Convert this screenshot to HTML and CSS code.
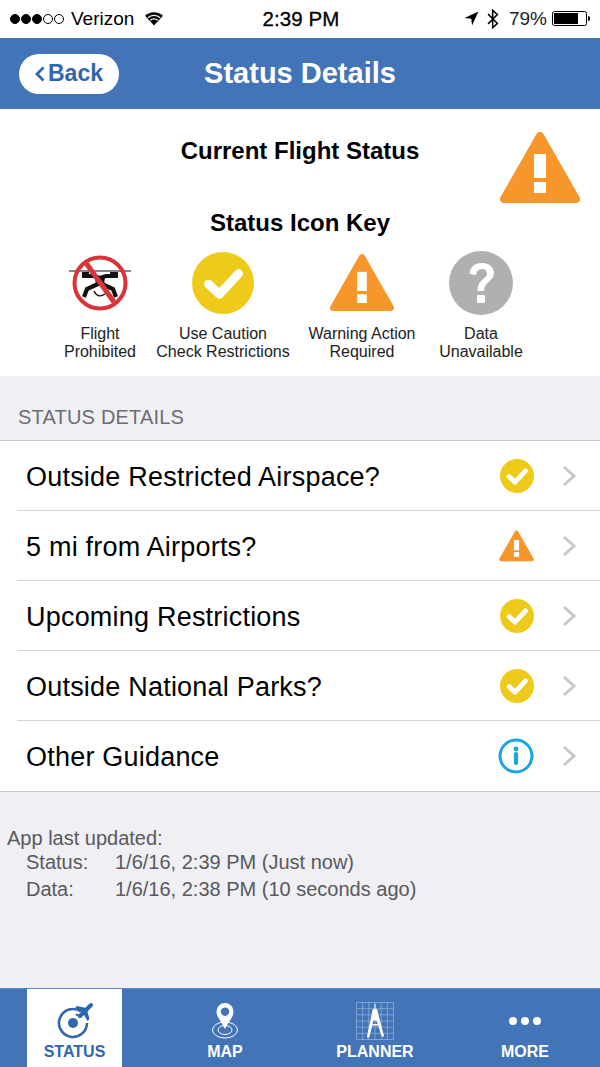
FILE: index.html
```html
<!DOCTYPE html>
<html lang="en">
<head>
<meta charset="utf-8">
<title>Status Details</title>
<link rel="stylesheet" href="styles.css">
</head>
<body>
<svg class="defs" width="0" height="0" aria-hidden="true">
  <symbol id="warn" viewBox="0 0 80 74">
    <path d="M40 5 L76 68 H4 Z" fill="#f7962a" stroke="#f7962a" stroke-width="8" stroke-linejoin="round"/>
    <rect x="34" y="23" width="12" height="24" fill="#fff"/>
    <rect x="34" y="51" width="12" height="11" fill="#fff"/>
  </symbol>
  <symbol id="check" viewBox="0 0 60 60">
    <circle cx="30" cy="30" r="30" fill="#eecb1b"/>
    <path d="M16 31 L26.500 41 L45 21" fill="none" stroke="#fff" stroke-width="8.500" stroke-linecap="round" stroke-linejoin="round"/>
  </symbol>
  <symbol id="chev" viewBox="0 0 14 22">
    <path d="M2 2 L12 11 L2 20" fill="none" stroke="#c7c7cc" stroke-width="3"/>
  </symbol>
</svg>
<div class="page">
  <header class="statusbar">
    <div class="sb-left">
      <span class="dots"><i class="dot"></i><i class="dot"></i><i class="dot"></i><i class="dot off"></i><i class="dot off"></i></span>
      <span>Verizon</span>
      <svg class="wifi" width="20" height="15" viewBox="0 0 18 14"><path d="M9 13.500 L0.600 4.500 A12 12 0 0 1 17.400 4.500 Z" fill="#000"/><path d="M3.300 6.300 A8.300 8.300 0 0 1 14.700 6.300 M5.500 8.700 A5 5 0 0 1 12.500 8.700" fill="none" stroke="#fff" stroke-width="1.200"/></svg>
    </div>
    <div class="sb-time">2:39 PM</div>
    <div class="sb-right">
      <svg width="15" height="15" viewBox="0 0 14 14"><path d="M13.500 0.500 L0.500 6.500 L6.800 7.200 L7.500 13.500 Z" fill="#000"/></svg>
      <svg class="bt" width="12" height="20" viewBox="0 0 11 18"><path d="M1 4.500 L9.500 13 L5.200 17 V1 L9.500 5 L1 13.500" fill="none" stroke="#000" stroke-width="1.400"/></svg>
      <span class="pct">79%</span>
      <span class="battery"><span class="battery-fill"></span></span><span class="battery-tip"></span>
    </div>
  </header>

  <nav class="navbar">
    <a class="back"><svg width="10" height="16" viewBox="0 0 10 16"><path d="M8.500 1.500 L2 8 L8.500 14.500" fill="none" stroke="#2f66ae" stroke-width="2.800"/></svg>Back</a>
    <h1 class="nav-title">Status Details</h1>
    <span></span>
  </nav>

  <section class="panel">
    <div class="current">
      <span></span>
      <h2 class="panel-title">Current Flight Status</h2>
      <svg class="current-icon" width="80" height="74"><use href="#warn"/></svg>
    </div>
    <h2 class="panel-title key-title">Status Icon Key</h2>
    <div class="key">
      <div class="key-item">
        <svg class="key-icon" width="62" height="62" viewBox="0 0 62 62">
          <path d="M0 19 H62" stroke="#111" stroke-width="1.200"/>
          <path d="M13 20 H20 V23 H13 Z M41 20 H49 V23 H41 Z" fill="#111"/>
          <path d="M13 24 H25 L31 26 L37 24 H49" fill="none" stroke="#111" stroke-width="4"/>
          <path d="M26 25 H36 L35 33 H27 Z" fill="#111"/>
          <path d="M31 31 L18 37 L15 45 M31 31 L44 37 L47 45" fill="none" stroke="#111" stroke-width="4.200"/>
          <path d="M25 39 Q29 47 36 42" fill="none" stroke="#111" stroke-width="1.400"/>
          <circle cx="31" cy="31" r="25.500" fill="none" stroke="#d9343c" stroke-width="4"/>
          <path d="M17 11 L45 50" stroke="#d9343c" stroke-width="5"/>
        </svg>
        <div class="key-label">Flight<br>Prohibited</div>
      </div>
      <div class="key-item">
        <svg class="key-icon" width="62" height="62"><use href="#check"/></svg>
        <div class="key-label">Use Caution<br>Check Restrictions</div>
      </div>
      <div class="key-item">
        <svg class="key-icon" width="64" height="60"><use href="#warn"/></svg>
        <div class="key-label">Warning Action<br>Required</div>
      </div>
      <div class="key-item">
        <svg class="key-icon" width="64" height="64" viewBox="0 0 64 64">
          <circle cx="32" cy="32" r="32" fill="#b0b0b0"/>
          <path d="M20.500 23 C21 15 27 12 33 12 C40 12 45 16 45 22 C45 30 35 31 35 40 H28.500 C28.500 28 38 28 38 22.500 C38 19.500 36 18 33 18 C29.500 18 27.500 20 27 24 Z" fill="#fff"/>
          <rect x="28" y="44" width="8" height="8" rx="1" fill="#fff"/>
        </svg>
        <div class="key-label">Data<br>Unavailable</div>
      </div>
    </div>
  </section>

  <main class="details">
    <div class="section-label">STATUS DETAILS</div>
    <ul class="list">
      <li class="row"><span class="row-text">Outside Restricted Airspace?</span><svg class="row-icon" width="34" height="34"><use href="#check"/></svg><svg class="chev" width="14" height="22"><use href="#chev"/></svg></li>
      <li class="row"><span class="row-text">5 mi from Airports?</span><svg class="row-icon" width="35" height="32"><use href="#warn"/></svg><svg class="chev" width="14" height="22"><use href="#chev"/></svg></li>
      <li class="row"><span class="row-text">Upcoming Restrictions</span><svg class="row-icon" width="34" height="34"><use href="#check"/></svg><svg class="chev" width="14" height="22"><use href="#chev"/></svg></li>
      <li class="row"><span class="row-text">Outside National Parks?</span><svg class="row-icon" width="34" height="34"><use href="#check"/></svg><svg class="chev" width="14" height="22"><use href="#chev"/></svg></li>
      <li class="row"><span class="row-text">Other Guidance</span>
        <svg class="row-icon" width="36" height="36" viewBox="0 0 36 36"><circle cx="18" cy="18" r="16" fill="none" stroke="#1ba6e2" stroke-width="3"/><circle cx="18" cy="11" r="2.400" fill="#1ba6e2"/><path d="M18 16 V25" stroke="#1ba6e2" stroke-width="4.200" stroke-linecap="round"/></svg>
        <svg class="chev" width="14" height="22"><use href="#chev"/></svg></li>
    </ul>
    <div class="updated">
      <div class="updated-head">App last updated:</div>
      <div class="updated-row"><span>Status:</span><span>1/6/16, 2:39 PM (Just now)</span></div>
      <div class="updated-row"><span>Data:</span><span>1/6/16, 2:38 PM (10 seconds ago)</span></div>
    </div>
  </main>

  <footer class="tabbar">
    <a class="tab active">
      <svg width="40" height="38" viewBox="0 0 40 38">
        <path d="M26 9.500 A14 14 0 1 0 32 21" fill="none" stroke="#2f66ae" stroke-width="2.600"/>
        <circle cx="18" cy="21" r="5" fill="#2f66ae"/>
        <path d="M25 14 L36 3" stroke="#2f66ae" stroke-width="4" stroke-linecap="round"/>
        <path d="M31 6 L22 4 L20 6 L27 10 Z M32 8 L34.500 17 L32.500 19 L28 11 Z M27 13 L21 11.500 L20.500 13 L25.500 16 Z" fill="#2f66ae"/>
      </svg>
      <span>STATUS</span>
    </a>
    <a class="tab">
      <svg width="28" height="38" viewBox="0 0 28 38">
        <path d="M14 27 C10 19 5.500 15 5.500 9.500 A8.500 8.500 0 0 1 22.500 9.500 C22.500 15 18 19 14 27 Z M14 5.500 A4.200 4.200 0 1 0 14.010 5.500 Z" fill="#fff" fill-rule="evenodd"/>
        <ellipse cx="14" cy="28" rx="12.500" ry="8" fill="none" stroke="#fff" stroke-width="1"/>
        <ellipse cx="14" cy="28" rx="7" ry="4.500" fill="none" stroke="#fff" stroke-width="1"/>
      </svg>
      <span>MAP</span>
    </a>
    <a class="tab">
      <svg width="38" height="38" viewBox="0 0 40 40">
        <path d="M.500.500H39.500V39.500H.500ZM7 0V40M13.500 0V40M20 0V40M26.500 0V40M33 0V40M0 7H40M0 13.500H40M0 20H40M0 26.500H40M0 33H40" fill="none" stroke="#8fb0da" stroke-width=".8"/>
        <path d="M20 2 V8 M18 8 H22 L23 13 L29 36 H27.500 L22 19 H18 L13.500 37 H12 L17 13 Z" fill="#fff" stroke="#fff"/>
        <path d="M16 24 H24" stroke="#fff" stroke-width="1.500"/>
      </svg>
      <span>PLANNER</span>
    </a>
    <a class="tab">
      <span class="more-dots"><i></i><i></i><i></i></span>
      <span>MORE</span>
    </a>
  </footer>
</div>
</body>
</html>
```

FILE: styles.css
```css
* { box-sizing: border-box; }
html, body { margin: 0; padding: 0; }
body { font-family: "Liberation Sans", Arial, sans-serif; color: #000; background: #efeff4; }
.defs { position: absolute; }
.page { width: 600px; height: 1067px; display: flex; flex-direction: column; overflow: hidden; }

.statusbar { height: 38px; background: #fff; display: grid; grid-template-columns: 1fr auto 1fr; align-items: center; padding: 0 10px 1px 10px; font-size: 19px; flex: none; }
.sb-left { display: flex; align-items: center; gap: 7px; }
.sb-left .wifi { margin-left: 3px; }
.dots { display: flex; gap: 1px; }
.dot { width: 10px; height: 10px; border-radius: 50%; background: #000; border: 1px solid #000; }
.dot.off { background: #fff; }
.sb-time { font-size: 20.500px; letter-spacing: .1px; padding-left: 2px; -webkit-text-stroke: .3px #000; }
.sb-right { display: flex; align-items: center; justify-content: flex-end; }
.bt { margin-left: 8px; }
.pct { margin-left: 10px; color: #222; }
.battery { margin-left: 5px; width: 35px; height: 15px; border: 1px solid #000; border-radius: 2.500px; padding: 1px; display: block; }
.battery-fill { display: block; height: 100%; width: 79%; background: #000; }
.battery-tip { width: 2px; height: 5px; background: #000; border-radius: 0 2px 2px 0; margin-left: 1px; }

.navbar { height: 71px; flex: none; background: #4374b7; display: grid; grid-template-columns: 1fr auto 1fr; align-items: center; padding: 0 19px; }
.back { width: 100px; height: 40px; border-radius: 20px; background: #fff; color: #2f66ae; font-weight: 700; font-size: 23px; display: flex; align-items: center; justify-content: center; gap: 3px; }
.nav-title { margin: 0; color: #fff; font-size: 29px; font-weight: 700; }

.panel { height: 267px; flex: none; background: #fff; padding-top: 22px; }
.current { display: grid; grid-template-columns: 1fr auto 1fr; height: 74px; }
.current-icon { justify-self: end; margin-right: 20px; }
.panel-title { margin: 0; font-size: 24px; line-height: 40px; font-weight: 700; text-align: center; }
.key-title { line-height: 36px; height: 36px; }
.key { display: grid; grid-template-columns: 104px 142px 136px 102px; padding-left: 48px; margin-top: 10px; }
.key-item { display: flex; flex-direction: column; align-items: center; }
.key-icon { height: 64px; display: block; }
.key-label { margin-top: 10px; font-size: 16px; line-height: 18px; text-align: center; color: #222; white-space: nowrap; }

.details { flex: 1; min-height: 0; }
.section-label { height: 64px; padding: 30px 18px 0; font-size: 20px; line-height: 23px; letter-spacing: .2px; color: #6d6d72; }
.list { list-style: none; margin: 0; padding: 0 0 0 17px; background: #fff; border-top: 1px solid #c8c7cc; border-bottom: 1px solid #c8c7cc; }
.row { height: 70px; display: flex; align-items: center; padding-right: 24px; border-bottom: 1px solid #d5d5d8; }
.row:last-child { border-bottom: 0; }
.row-text { flex: 1; padding: 3px 0 0 9px; font-size: 27px; letter-spacing: .21px; }
.row-icon { display: block; }
.row-icon + .chev { margin-left: 28px; }
.chev { display: block; }

.updated { padding: 34px 0 0 7px; font-size: 20px; line-height: 27px; color: #59595e; }
.updated-head { height: 23px; line-height: 24px; }
.updated-row { display: grid; grid-template-columns: 89px auto; padding-left: 19px; }

.tabbar { height: 79px; flex: none; background: #4374b7; display: grid; grid-template-columns: repeat(4, 150px); border-top: 1px solid #5b86c0; }
.tab { display: flex; flex-direction: column; align-items: center; justify-content: flex-end; padding-bottom: 6px; color: #fff; font-weight: 700; font-size: 16px; line-height: 18px; }
.tab svg { display: block; margin-bottom: 3px; }
.tab.active { width: 95px; margin-left: 27px; background: #fff; color: #2f66ae; }
.more-dots { display: flex; gap: 4px; height: 36px; align-items: center; margin-bottom: 4px; }
.more-dots i { width: 8px; height: 8px; border-radius: 50%; background: #fff; }
```
